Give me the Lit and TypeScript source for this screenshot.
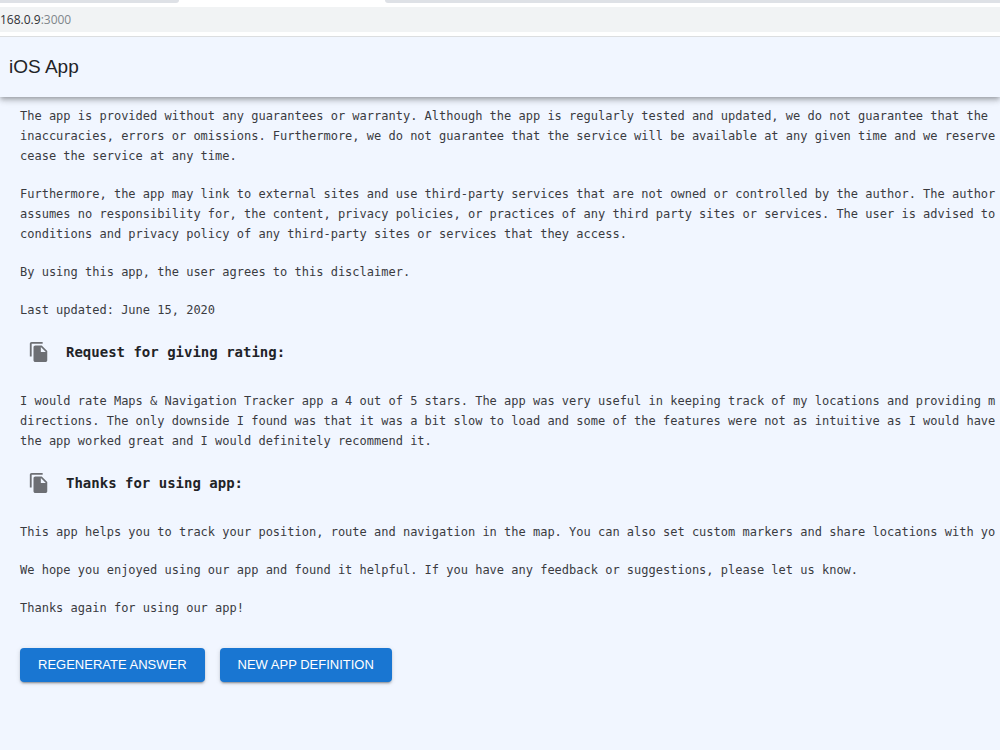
import { LitElement, html, css } from "lit";
import { customElement, property } from "lit/decorators.js";

interface Section {
  title?: string;
  paragraphs: string[];
}

const SECTIONS: Section[] = [
  {
    paragraphs: [
      "The app is provided without any guarantees or warranty. Although the app is regularly tested and updated, we do not guarantee that the\ninaccuracies, errors or omissions. Furthermore, we do not guarantee that the service will be available at any given time and we reserve\ncease the service at any time.",
      "Furthermore, the app may link to external sites and use third-party services that are not owned or controlled by the author. The author\nassumes no responsibility for, the content, privacy policies, or practices of any third party sites or services. The user is advised to\nconditions and privacy policy of any third-party sites or services that they access.",
      "By using this app, the user agrees to this disclaimer.",
      "Last updated: June 15, 2020",
    ],
  },
  {
    title: "Request for giving rating:",
    paragraphs: [
      "I would rate Maps & Navigation Tracker app a 4 out of 5 stars. The app was very useful in keeping track of my locations and providing m\ndirections. The only downside I found was that it was a bit slow to load and some of the features were not as intuitive as I would have\nthe app worked great and I would definitely recommend it.",
    ],
  },
  {
    title: "Thanks for using app:",
    paragraphs: [
      "This app helps you to track your position, route and navigation in the map. You can also set custom markers and share locations with yo",
      "We hope you enjoyed using our app and found it helpful. If you have any feedback or suggestions, please let us know.",
      "Thanks again for using our app!",
    ],
  },
];

@customElement("browser-chrome")
class BrowserChrome extends LitElement {
  static styles = css`
    :host {
      display: block;
      background: #fff;
      border-bottom: 1px solid #dcdee0;
      font-family: "Open Sans", "Noto Sans", sans-serif;
    }
    .tabs {
      display: flex;
      height: 7px;
      gap: 206px;
    }
    .tab {
      height: 3px;
      background: #dee1e6;
    }
    .before {
      width: 179px;
      border-bottom-right-radius: 4px;
    }
    .after {
      flex: 1;
      border-bottom-left-radius: 4px;
    }
    .address {
      display: flex;
      height: 25px;
      margin-bottom: 4px;
      background: #f1f3f4;
      font-size: 12px;
      line-height: 25px;
      color: #303134;
    }
    .port {
      color: #80868b;
    }
  `;
  render() {
    return html`
      <div class="tabs"><div class="tab before"></div><div class="tab after"></div></div>
      <div class="address"><span>168.0.9</span><span class="port">:3000</span></div>
    `;
  }
}

@customElement("answer-section")
class AnswerSection extends LitElement {
  @property({ attribute: false }) section!: Section;

  static styles = css`
    :host {
      display: block;
      font-family: Consolas, "DejaVu Sans Mono", monospace;
      color: #3a3b3f;
    }
    .head {
      display: flex;
      align-items: center;
      gap: 8px;
      margin-bottom: 20px;
    }
    .copy {
      display: flex;
      padding: 8px;
      border: 0;
      border-radius: 50%;
      background: none;
      color: #6d6f74;
      cursor: pointer;
    }
    .copy:hover {
      background: rgba(0, 0, 0, 0.04);
    }
    .icon {
      width: 22px;
      height: 22px;
      fill: currentColor;
    }
    .title {
      margin: 0;
      font-size: 14px;
      line-height: 20px;
      font-weight: 700;
      color: #222327;
    }
    .body {
      display: flex;
      flex-direction: column;
      gap: 18px;
    }
    .text {
      margin: 0;
      font-size: 12px;
      line-height: 20px;
      white-space: pre;
    }
  `;
  render() {
    const { title, paragraphs } = this.section;
    return html`
      ${title
        ? html`<div class="head">
            <button class="copy" aria-label="Copy">
              <svg class="icon" viewBox="0 0 24 24" aria-hidden="true">
                <path d="M16 1H4c-1.1 0-2 .9-2 2v14h2V3h12V1zm-1 4l6 6v10c0 1.1-.9 2-2 2H7.99C6.89 23 6 22.1 6 21l.01-14c0-1.1.89-2 1.99-2h7zm-1 7h5.5L14 6.5V12z" />
              </svg>
            </button>
            <h2 class="title">${title}</h2>
          </div>`
        : ""}
      <div class="body">${paragraphs.map((p) => html`<p class="text">${p}</p>`)}</div>
    `;
  }
}

@customElement("app-root")
class AppRoot extends LitElement {
  static styles = css`
    :host {
      display: block;
      min-height: 100vh;
      overflow: hidden;
      background: #f1f6ff;
      font-family: "Liberation Sans", Arial, sans-serif;
    }
    .bar {
      display: flex;
      align-items: center;
      height: 60px;
      padding: 0 9px;
      box-shadow: 0 2px 4px -1px rgba(0, 0, 0, 0.2), 0 4px 5px 0 rgba(0, 0, 0, 0.14),
        0 1px 10px 0 rgba(0, 0, 0, 0.12);
      clip-path: inset(0 0 -16px 0);
    }
    .name {
      margin: 0;
      font-size: 19px;
      line-height: 30px;
      font-weight: 400;
      color: #222327;
    }
    .content {
      display: flex;
      flex-direction: column;
      gap: 13px;
      padding: 9px 20px;
    }
    .actions {
      display: flex;
      gap: 15px;
      margin-top: 17px;
    }
    .action {
      padding: 0 18px;
      border: 0;
      border-radius: 4px;
      background: #1976d2;
      color: #fff;
      font: 13px/34px "Liberation Sans", Arial, sans-serif;
      text-transform: uppercase;
      white-space: nowrap;
      cursor: pointer;
      box-shadow: 0 3px 1px -2px rgba(0, 0, 0, 0.2), 0 2px 2px 0 rgba(0, 0, 0, 0.14),
        0 1px 5px 0 rgba(0, 0, 0, 0.12);
    }
    .action:hover {
      background: #1565c0;
    }
  `;
  render() {
    return html`
      <browser-chrome></browser-chrome>
      <header class="bar"><h1 class="name">iOS App</h1></header>
      <main class="content">
        ${SECTIONS.map((s) => html`<answer-section .section=${s}></answer-section>`)}
        <div class="actions">
          <button class="action">Regenerate answer</button>
          <button class="action">New app definition</button>
        </div>
      </main>
    `;
  }
}
